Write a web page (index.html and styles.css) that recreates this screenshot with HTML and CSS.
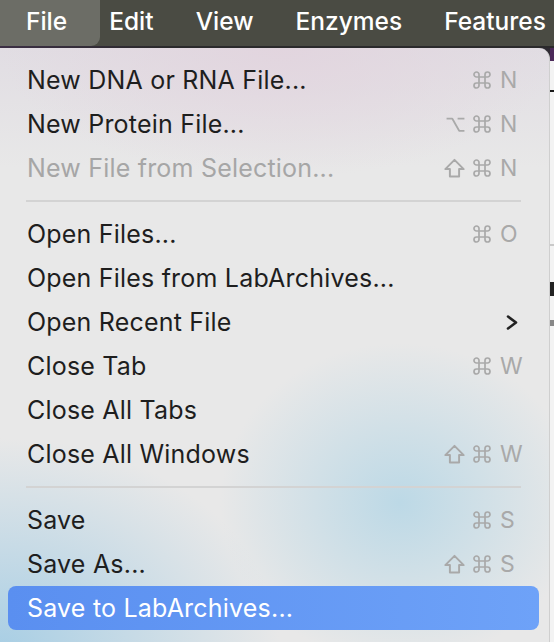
FILE: index.html
```html
<!DOCTYPE html>
<html lang="en">
<head>
  <meta charset="UTF-8">
  <title>File menu</title>
  <link rel="stylesheet" href="styles.css">
</head>
<body>
  <div class="menubar">
    <span class="menu-title active">File</span>
    <span class="menu-title">Edit</span>
    <span class="menu-title">View</span>
    <span class="menu-title">Enzymes</span>
    <span class="menu-title">Features</span>
  </div>
  <div class="edge"></div>
  <div class="main">
    <div class="menu">
      <div class="item">
        <span class="label">New DNA or RNA File...</span>
        <span class="mods"><svg class="cmd" viewBox="0 0 20 20"><path d="M7 7V4.5A2.5 2.5 0 1 0 4.5 7H15.5A2.5 2.5 0 1 0 13 4.5V15.5A2.5 2.5 0 1 0 15.5 13H4.5A2.5 2.5 0 1 0 7 15.5Z"/></svg></span>
        <span class="key">N</span>
      </div>
      <div class="item">
        <span class="label">New Protein File...</span>
        <span class="mods"><svg class="opt" viewBox="0 0 20 20"><path d="M1.5 4.5H7L13.5 16H18.5M12 4.5H18.5"/></svg><svg class="cmd" viewBox="0 0 20 20"><path d="M7 7V4.5A2.5 2.5 0 1 0 4.5 7H15.5A2.5 2.5 0 1 0 13 4.5V15.5A2.5 2.5 0 1 0 15.5 13H4.5A2.5 2.5 0 1 0 7 15.5Z"/></svg></span>
        <span class="key">N</span>
      </div>
      <div class="item disabled">
        <span class="label">New File from Selection...</span>
        <span class="mods"><svg class="shift" viewBox="0 0 20 20"><path d="M10 2.5L18 10.5H14V17H6V10.5H2Z"/></svg><svg class="cmd" viewBox="0 0 20 20"><path d="M7 7V4.5A2.5 2.5 0 1 0 4.5 7H15.5A2.5 2.5 0 1 0 13 4.5V15.5A2.5 2.5 0 1 0 15.5 13H4.5A2.5 2.5 0 1 0 7 15.5Z"/></svg></span>
        <span class="key">N</span>
      </div>
      <div class="separator"></div>
      <div class="item">
        <span class="label">Open Files...</span>
        <span class="mods"><svg class="cmd" viewBox="0 0 20 20"><path d="M7 7V4.5A2.5 2.5 0 1 0 4.5 7H15.5A2.5 2.5 0 1 0 13 4.5V15.5A2.5 2.5 0 1 0 15.5 13H4.5A2.5 2.5 0 1 0 7 15.5Z"/></svg></span>
        <span class="key">O</span>
      </div>
      <div class="item">
        <span class="label">Open Files from LabArchives...</span>
      </div>
      <div class="item">
        <span class="label">Open Recent File</span>
        <span class="key"><svg class="chevron" viewBox="0 0 12 15"><path d="M2 1.5L10 7.5L2 13.5"/></svg></span>
      </div>
      <div class="item">
        <span class="label">Close Tab</span>
        <span class="mods"><svg class="cmd" viewBox="0 0 20 20"><path d="M7 7V4.5A2.5 2.5 0 1 0 4.5 7H15.5A2.5 2.5 0 1 0 13 4.5V15.5A2.5 2.5 0 1 0 15.5 13H4.5A2.5 2.5 0 1 0 7 15.5Z"/></svg></span>
        <span class="key">W</span>
      </div>
      <div class="item">
        <span class="label">Close All Tabs</span>
      </div>
      <div class="item">
        <span class="label">Close All Windows</span>
        <span class="mods"><svg class="shift" viewBox="0 0 20 20"><path d="M10 2.5L18 10.5H14V17H6V10.5H2Z"/></svg><svg class="cmd" viewBox="0 0 20 20"><path d="M7 7V4.5A2.5 2.5 0 1 0 4.5 7H15.5A2.5 2.5 0 1 0 13 4.5V15.5A2.5 2.5 0 1 0 15.5 13H4.5A2.5 2.5 0 1 0 7 15.5Z"/></svg></span>
        <span class="key">W</span>
      </div>
      <div class="separator"></div>
      <div class="item">
        <span class="label">Save</span>
        <span class="mods"><svg class="cmd" viewBox="0 0 20 20"><path d="M7 7V4.5A2.5 2.5 0 1 0 4.5 7H15.5A2.5 2.5 0 1 0 13 4.5V15.5A2.5 2.5 0 1 0 15.5 13H4.5A2.5 2.5 0 1 0 7 15.5Z"/></svg></span>
        <span class="key">S</span>
      </div>
      <div class="item">
        <span class="label">Save As...</span>
        <span class="mods"><svg class="shift" viewBox="0 0 20 20"><path d="M10 2.5L18 10.5H14V17H6V10.5H2Z"/></svg><svg class="cmd" viewBox="0 0 20 20"><path d="M7 7V4.5A2.5 2.5 0 1 0 4.5 7H15.5A2.5 2.5 0 1 0 13 4.5V15.5A2.5 2.5 0 1 0 15.5 13H4.5A2.5 2.5 0 1 0 7 15.5Z"/></svg></span>
        <span class="key">S</span>
      </div>
      <div class="item selected">
        <span class="label">Save to LabArchives...</span>
      </div>
    </div>
    <!-- sliver of the window behind the menu -->
    <div class="backdrop">
      <div class="bd-title"></div>
      <div class="bd-line dark"></div>
      <div class="bd-line light"></div>
      <div class="bd-mark"></div>
      <div class="bd-line grey"></div>
    </div>
  </div>
</body>
</html>
```

FILE: styles.css
```css
body {
  margin: 0;
  width: 554px;
  height: 642px;
  overflow: hidden;
  font-family: Inter, "Liberation Sans", sans-serif;
  background-color: #2f2b33;
}

.menubar {
  display: flex;
  align-items: flex-start;
  gap: 42px;
  height: 46px;
  padding-left: 26px;
  background-color: #4a4b43;
  color: #ffffff;
  font-size: 24.5px;
  font-weight: 500;
  white-space: nowrap;
  overflow: hidden;
}

.menu-title {
  line-height: 42px;
  padding-bottom: 4px;
}

.menu-title.active {
  margin-left: -26px;
  margin-right: -33px;
  padding-left: 26px;
  padding-right: 33px;
  background-color: #6c6d66;
  border-bottom-right-radius: 9px;
}

.edge {
  height: 2px;
  background: linear-gradient(90deg, #3c2f45, #2b2a2c 30%, #2b2a2c);
}

.main {
  display: flex;
  height: 594px;
}

.menu {
  width: 550px;
  flex-shrink: 0;
  padding-top: 10px;
  box-sizing: border-box;
  border-top-right-radius: 11px;
  border-right: 1px solid #cfcfcf;
  background:
    radial-gradient(ellipse 180px 160px at 400px 455px, rgba(186, 216, 230, 0.95), rgba(186, 216, 230, 0) 100%),
    radial-gradient(ellipse 280px 210px at 0px 600px, rgba(165, 205, 228, 0.95), rgba(165, 205, 228, 0) 100%),
    radial-gradient(ellipse 280px 130px at 280px 0px, rgba(226, 212, 222, 0.9), rgba(226, 212, 222, 0) 100%),
    linear-gradient(180deg, #e1dde3 0px, #e8e8e8 120px, #e8e8e8);
  color: #1e1e1e;
  font-size: 25px;
  letter-spacing: 0.2px;
}

.item {
  display: flex;
  align-items: center;
  height: 44px;
  margin: 0 10px 0 8px;
  padding-left: 19px;
  border-radius: 8px;
  white-space: nowrap;
}

.label {
  flex: 1;
}

.mods {
  display: flex;
  align-items: center;
  gap: 6px;
}

.mods svg {
  fill: none;
  stroke: #a9a9a9;
  stroke-width: 1.7;
  stroke-linejoin: round;
}

.cmd {
  width: 20px;
  height: 20px;
}

.shift {
  width: 23px;
  height: 23px;
}

.opt {
  width: 21px;
  height: 21px;
}

.key {
  width: 39px;
  margin-left: 8px;
  color: #a9a9a9;
  font-size: 23px;
  letter-spacing: 0;
  display: flex;
  align-items: center;
}

.chevron {
  width: 12px;
  height: 15px;
  margin-left: 6px;
  fill: none;
  stroke: #222222;
  stroke-width: 2.6;
  stroke-linecap: round;
  stroke-linejoin: round;
}

.disabled .label {
  color: #a6a6a6;
}

.separator {
  height: 2px;
  margin: 10px 28px 10px 26px;
  background-color: #d3d3d3;
}

.selected {
  background: linear-gradient(90deg, #5a8ff0, #6ea2f8);
  color: #ffffff;
}

.backdrop {
  flex: 1;
  background-color: #f3f3f3;
}

.bd-title {
  height: 13px;
  background-color: #4c2a5a;
}

.bd-line {
  height: 2px;
}

.bd-line.dark {
  margin-top: 29px;
  background-color: #1a1a1a;
}

.bd-line.light {
  margin-top: 152px;
  background-color: #c9c9c9;
}

.bd-mark {
  height: 14px;
  margin-top: 36px;
  background-color: #222222;
}

.bd-line.grey {
  margin-top: 24px;
  height: 6px;
  background-color: #888888;
}
```
